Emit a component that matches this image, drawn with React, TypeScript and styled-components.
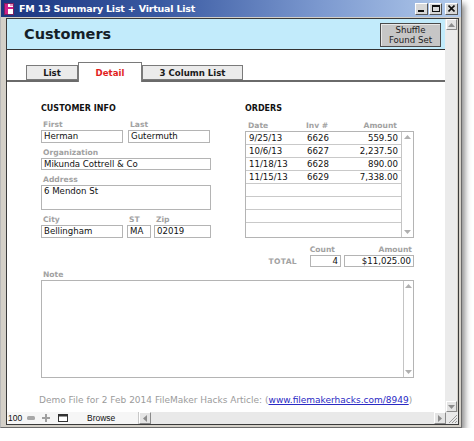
import styled, { createGlobalStyle } from "styled-components";

const GlobalStyle = createGlobalStyle`
  body {
    margin: 0;
    background: #ffffff;
    font-family: "DejaVu Sans", Verdana, sans-serif;
  }
`;

const Window = styled.div`
  width: 462px;
  height: 428px;
  box-sizing: border-box;
  background: #d4d0c8;
  border: 1px solid #6a6a6a;
  border-top: none;
  border-left-color: #b8b8b8;
  box-shadow: 3px 4px 6px rgba(0, 0, 0, 0.45);
  display: flex;
  flex-direction: column;
`;

const TitleBar = styled.div`
  height: 17px;
  flex-shrink: 0;
  display: flex;
  align-items: center;
  padding: 0 3px 0 3px;
  background: linear-gradient(to right, #1b3680 0%, #3a5aa2 35%, #7d9ad0 70%, #b3cbec 100%);
`;

const TitleText = styled.span`
  flex: 1;
  margin-left: 5px;
  color: #ffffff;
  font-family: "DejaVu Sans", Tahoma, sans-serif;
  font-weight: bold;
  font-size: 9.5px;
  letter-spacing: -0.2px;
  white-space: nowrap;
`;

const Controls = styled.div`
  display: flex;
  gap: 1px;
`;

const CtrlButton = styled.div`
  width: 11px;
  height: 10px;
  background: #d8d8d8;
  border: 1px solid;
  border-color: #ffffff #555 #555 #ffffff;
  display: flex;
  align-items: center;
  justify-content: center;
`;

const Frame = styled.div`
  flex: 1;
  display: flex;
  flex-direction: column;
  padding: 1px 2px 2px 5px;
  min-height: 0;
`;

const Inner = styled.div`
  flex: 1;
  display: flex;
  flex-direction: column;
  border: 1px solid #3a3a3a;
  min-height: 0;
`;

const MainRow = styled.div`
  display: flex;
  height: 393px;
`;

const Content = styled.div`
  width: 438px;
  background: #ffffff;
  display: flex;
  flex-direction: column;
  overflow: hidden;
`;

const VScroll = styled.div`
  width: 12px;
  background: #ebebeb;
  display: flex;
  flex-direction: column;
  justify-content: space-between;
  align-items: center;
  box-sizing: border-box;
`;

const ArrowBtn = styled.div<{ $size?: number }>`
  width: ${(p) => p.$size ?? 11}px;
  height: ${(p) => p.$size ?? 11}px;
  background: #e4e4e4;
  border: 1px solid;
  border-color: #ffffff #8a8a8a #8a8a8a #ffffff;
  box-sizing: border-box;
  display: flex;
  align-items: center;
  justify-content: center;
`;

const Header = styled.div`
  height: 30px;
  flex-shrink: 0;
  background: #c2ebfb;
  border-bottom: 1px solid #333;
  display: flex;
  align-items: center;
  justify-content: space-between;
  padding: 0 4px 0 17px;
`;

const PageTitle = styled.h1`
  margin: 0;
  font-size: 14.5px;
  font-weight: bold;
  color: #141e28;
`;

const ShuffleButton = styled.button`
  width: 61px;
  height: 24px;
  padding: 0;
  margin-top: 1px;
  background: #c6c6c6;
  border: 1px solid #4a4a4a;
  box-shadow: inset 1px 1px 0 #e8e8e8;
  font-family: "DejaVu Sans", Verdana, sans-serif;
  font-size: 8.6px;
  line-height: 10px;
  color: #222;
`;

const TabRow = styled.div`
  display: flex;
  align-items: flex-end;
  height: 18px;
  margin-top: 12px;
  padding-left: 19px;
  border-bottom: 2px solid #6a6a6a;
  flex-shrink: 0;
`;

const Tab = styled.div<{ $active?: boolean; $w: number }>`
  width: ${(p) => p.$w}px;
  height: ${(p) => (p.$active ? 20 : 15)}px;
  box-sizing: border-box;
  margin-bottom: ${(p) => (p.$active ? -2 : 0)}px;
  background: ${(p) => (p.$active ? "#ffffff" : "#ebebeb")};
  border: 1px solid #7a7a7a;
  border-bottom: ${(p) => (p.$active ? "none" : "1px solid #7a7a7a")};
  display: flex;
  align-items: center;
  justify-content: center;
  padding-top: ${(p) => (p.$active ? 1 : 0)}px;
  font-size: 8.6px;
  font-weight: bold;
  color: ${(p) => (p.$active ? "#e21d1d" : "#1a1a1a")};
  position: relative;
  z-index: ${(p) => (p.$active ? 1 : 0)};
`;

const FormGrid = styled.div`
  display: grid;
  grid-template-columns: 170px 169px;
  column-gap: 34px;
  row-gap: 3px;
  padding: 22px 0 0 34px;
`;

const Column = styled.div`
  display: flex;
  flex-direction: column;
`;

const SectionHead = styled.div`
  font-size: 8px;
  line-height: 10px;
  font-weight: bold;
  color: #111;
`;

const FieldRow = styled.div<{ $gap?: number; $mt?: number }>`
  display: flex;
  gap: ${(p) => p.$gap ?? 5}px;
  margin-top: ${(p) => p.$mt ?? 5}px;
`;

const Field = styled.div<{ $w: number }>`
  width: ${(p) => p.$w}px;
  display: flex;
  flex-direction: column;
`;

const Label = styled.div<{ $align?: string }>`
  font-size: 7.6px;
  line-height: 10px;
  font-weight: bold;
  color: #a2a2a2;
  padding: 0 2px;
  text-align: ${(p) => p.$align ?? "left"};
  white-space: nowrap;
`;

const Input = styled.div<{ $h?: number; $align?: string; $w?: number }>`
  ${(p) => (p.$w ? `width: ${p.$w}px;` : "")}
  height: ${(p) => p.$h ?? 13}px;
  box-sizing: border-box;
  border: 1px solid #b4b4b4;
  padding: 0 2px;
  font-size: 8.6px;
  line-height: ${(p) => Math.min((p.$h ?? 13) - 2, 11)}px;
  color: #111;
  text-align: ${(p) => p.$align ?? "left"};
  white-space: nowrap;
  overflow: hidden;
`;

const OrderCols = styled.div`
  display: grid;
  grid-template-columns: 58px 50px 1fr;
  padding: 0 4px 0 3px;
  width: 156px;
  box-sizing: border-box;
  align-items: center;
`;

const OrderHeader = styled(OrderCols)`
  margin-top: 7px;
  font-size: 7.6px;
  line-height: 10px;
  font-weight: bold;
  color: #a2a2a2;
`;

const Portal = styled.div`
  height: 107px;
  box-sizing: border-box;
  border: 1px solid #b4b4b4;
  display: flex;
`;

const PortalRows = styled.div`
  width: 155px;
  display: flex;
  flex-direction: column;
`;

const PortalRow = styled(OrderCols)`
  height: 13px;
  flex-shrink: 0;
  border-bottom: 1px solid #c9c9c9;
  font-size: 8.6px;
  color: #111;
  &:last-child {
    border-bottom: none;
  }
`;

const Right = styled.span`
  text-align: right;
`;

const MiniScroll = styled.div<{ $w: number }>`
  width: ${(p) => p.$w}px;
  border-left: 1px solid #c4c4c4;
  display: flex;
  flex-direction: column;
  justify-content: space-between;
  align-items: center;
  padding: 3px 0 3px;
  box-sizing: border-box;
  background: #ffffff;
`;

const TotalsLabels = styled.div`
  display: flex;
  justify-content: flex-end;
  gap: 3px;
  margin-top: 7px;
`;

const TotalsRow = styled.div`
  display: flex;
  justify-content: flex-end;
  align-items: center;
  gap: 3px;
`;

const TotalText = styled.div`
  font-size: 7.6px;
  font-weight: bold;
  color: #a2a2a2;
  margin-right: 10px;
  letter-spacing: 0.3px;
`;

const NoteArea = styled.div`
  grid-column: 1 / span 2;
  display: flex;
  flex-direction: column;
  width: 373px;
`;

const NoteBox = styled.div`
  height: 98px;
  box-sizing: border-box;
  border: 1px solid #b4b4b4;
  display: flex;
  justify-content: flex-end;
`;

const Footer = styled.div`
  margin: 17px 0 0 32px;
  font-size: 9px;
  line-height: 10px;
  color: #9b9b9b;
  white-space: nowrap;
`;

const Link = styled.a`
  color: #2a2ac4;
  text-decoration: underline;
`;

const StatusBar = styled.div`
  height: 12px;
  display: flex;
  align-items: stretch;
  background: #f6f6f6;
  font-family: "Liberation Sans", Arial, sans-serif;
  font-size: 8.5px;
  color: #111;
`;

const StatusLeft = styled.div`
  width: 130px;
  display: flex;
  align-items: center;
  padding-left: 1px;
`;

const ZoomLevel = styled.span`
  width: 19px;
`;

const StatusIcon = styled.span<{ $w: number }>`
  width: ${(p) => p.$w}px;
  display: flex;
  align-items: center;
`;

const Mode = styled.span`
  margin-left: 17px;
`;

const HTrack = styled.div`
  flex: 1;
  display: flex;
  justify-content: space-between;
  background: #e9e9e9;
  border-left: 1px solid #c8c8c8;
`;

const Grip = styled.div`
  width: 12px;
  background: #e9e9e9;
  display: flex;
  align-items: flex-end;
  justify-content: flex-end;
`;

const Tri = ({ dir, c = "#8c8c8c" }: { dir: "up" | "down" | "left" | "right"; c?: string }) => {
  const pts = {
    up: "0,4 3.5,0 7,4",
    down: "0,0 3.5,4 7,0",
    left: "4,0 0,3.5 4,7",
    right: "0,0 4,3.5 0,7",
  }[dir];
  const vertical = dir === "up" || dir === "down";
  return (
    <svg width={vertical ? 7 : 4} height={vertical ? 4 : 7} viewBox={vertical ? "0 0 7 4" : "0 0 4 7"}>
      <polygon points={pts} fill={c} />
    </svg>
  );
};

const orders = [
  ["9/25/13", "6626", "559.50"],
  ["10/6/13", "6627", "2,237.50"],
  ["11/18/13", "6628", "890.00"],
  ["11/15/13", "6629", "7,338.00"],
  ["", "", ""],
  ["", "", ""],
  ["", "", ""],
  ["", "", ""],
];

export default function App() {
  return (
    <>
      <GlobalStyle />
      <Window>
        <TitleBar>
          <svg width="10" height="12" viewBox="0 0 10 12">
            <rect x="0.5" y="0.5" width="9" height="11" fill="#ffffff" stroke="#7a2060" />
            <rect x="1" y="1" width="3" height="10" fill="#d0208a" />
            <rect x="4" y="4" width="5" height="2" fill="#d0208a" />
            <rect x="6" y="1" width="3" height="2" fill="#e890c0" />
          </svg>
          <TitleText>FM 13 Summary List + Virtual List</TitleText>
          <Controls>
            <CtrlButton>
              <svg width="7" height="7" viewBox="0 0 7 7">
                <rect x="0" y="5" width="6" height="2" fill="#111" />
              </svg>
            </CtrlButton>
            <CtrlButton>
              <svg width="8" height="7" viewBox="0 0 8 7">
                <rect x="0.5" y="0.5" width="7" height="6" fill="none" stroke="#111" />
                <rect x="0" y="0" width="8" height="2" fill="#111" />
              </svg>
            </CtrlButton>
            <CtrlButton style={{ marginLeft: 2 }}>
              <svg width="7" height="7" viewBox="0 0 7 7">
                <path d="M0.5 0.5 L6.5 6.5 M6.5 0.5 L0.5 6.5" stroke="#111" strokeWidth="1.6" />
              </svg>
            </CtrlButton>
          </Controls>
        </TitleBar>
        <Frame>
          <Inner>
            <MainRow>
              <Content>
                <Header>
                  <PageTitle>Customers</PageTitle>
                  <ShuffleButton>
                    Shuffle
                    <br />
                    Found Set
                  </ShuffleButton>
                </Header>
                <TabRow>
                  <Tab $w={52}>List</Tab>
                  <Tab $w={64} $active>
                    Detail
                  </Tab>
                  <Tab $w={101}>3 Column List</Tab>
                </TabRow>
                <FormGrid>
                  <Column>
                    <SectionHead>CUSTOMER INFO</SectionHead>
                    <FieldRow $mt={6}>
                      <Field $w={82}>
                        <Label>First</Label>
                        <Input>Herman</Input>
                      </Field>
                      <Field $w={82}>
                        <Label>Last</Label>
                        <Input>Gutermuth</Input>
                      </Field>
                    </FieldRow>
                    <FieldRow>
                      <Field $w={170}>
                        <Label>Organization</Label>
                        <Input $h={12}>Mikunda Cottrell &amp; Co</Input>
                      </Field>
                    </FieldRow>
                    <FieldRow>
                      <Field $w={170}>
                        <Label>Address</Label>
                        <Input $h={25}>6 Mendon St</Input>
                      </Field>
                    </FieldRow>
                    <FieldRow $gap={0}>
                      <Field $w={86}>
                        <Label>City</Label>
                        <Input $w={82}>Bellingham</Input>
                      </Field>
                      <Field $w={27}>
                        <Label>ST</Label>
                        <Input $w={24}>MA</Input>
                      </Field>
                      <Field $w={57}>
                        <Label>Zip</Label>
                        <Input>02019</Input>
                      </Field>
                    </FieldRow>
                  </Column>
                  <Column>
                    <SectionHead>ORDERS</SectionHead>
                    <OrderHeader>
                      <span>Date</span>
                      <span>Inv #</span>
                      <Right>Amount</Right>
                    </OrderHeader>
                    <Portal>
                      <PortalRows>
                        {orders.map((o, i) => (
                          <PortalRow key={i}>
                            <span>{o[0]}</span>
                            <span>{o[1]}</span>
                            <Right>{o[2]}</Right>
                          </PortalRow>
                        ))}
                      </PortalRows>
                      <MiniScroll $w={12}>
                        <Tri dir="up" c="#b0b0b0" />
                        <Tri dir="down" c="#b0b0b0" />
                      </MiniScroll>
                    </Portal>
                    <TotalsLabels>
                      <Label $align="right" style={{ width: 31 }}>
                        Count
                      </Label>
                      <Label $align="right" style={{ width: 70 }}>
                        Amount
                      </Label>
                    </TotalsLabels>
                    <TotalsRow>
                      <TotalText>TOTAL</TotalText>
                      <Input $h={12} $align="right" $w={31}>
                        4
                      </Input>
                      <Input $h={12} $align="right" $w={70}>
                        $11,025.00
                      </Input>
                    </TotalsRow>
                  </Column>
                  <NoteArea>
                    <Label>Note</Label>
                    <NoteBox>
                      <MiniScroll $w={10}>
                        <Tri dir="up" c="#b0b0b0" />
                        <Tri dir="down" c="#b0b0b0" />
                      </MiniScroll>
                    </NoteBox>
                  </NoteArea>
                </FormGrid>
                <Footer>
                  Demo File for 2 Feb 2014 FileMaker Hacks Article: (
                  <Link href="#">www.filemakerhacks.com/8949</Link>)
                </Footer>
              </Content>
              <VScroll>
                <ArrowBtn>
                  <Tri dir="up" />
                </ArrowBtn>
                <ArrowBtn>
                  <Tri dir="down" />
                </ArrowBtn>
              </VScroll>
            </MainRow>
            <StatusBar>
              <StatusLeft>
                <ZoomLevel>100</ZoomLevel>
                <StatusIcon $w={15}>
                  <svg width="8" height="4" viewBox="0 0 8 4">
                    <rect x="0" y="0" width="8" height="4" rx="1.5" fill="#a8a8a8" />
                  </svg>
                </StatusIcon>
                <StatusIcon $w={16}>
                  <svg width="8" height="8" viewBox="0 0 8 8">
                    <path d="M3 0h2v3h3v2H5v3H3V5H0V3h3z" fill="#a0a0a0" />
                  </svg>
                </StatusIcon>
                <StatusIcon $w={12}>
                  <svg width="10" height="8" viewBox="0 0 10 8">
                    <rect x="0.5" y="0.5" width="9" height="7" fill="#fff" stroke="#333" />
                    <rect x="0.5" y="0.5" width="9" height="2" fill="#333" />
                  </svg>
                </StatusIcon>
                <Mode>Browse</Mode>
              </StatusLeft>
              <HTrack>
                <ArrowBtn $size={12}>
                  <Tri dir="left" />
                </ArrowBtn>
                <ArrowBtn $size={12}>
                  <Tri dir="right" />
                </ArrowBtn>
              </HTrack>
              <Grip>
                <svg width="11" height="11" viewBox="0 0 11 11">
                  <path d="M10 2 L2 10 M10 5 L5 10 M10 8 L8 10" stroke="#9a9a9a" strokeWidth="1" />
                </svg>
              </Grip>
            </StatusBar>
          </Inner>
        </Frame>
      </Window>
    </>
  );
}
